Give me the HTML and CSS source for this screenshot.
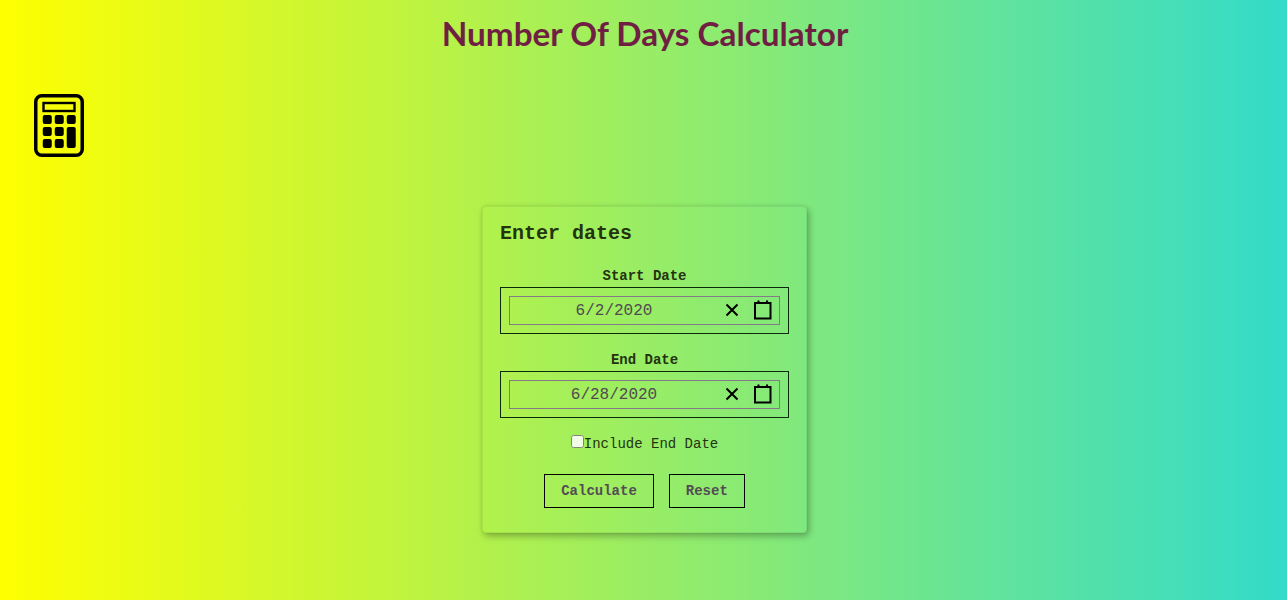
FILE: index.html
```html
<!DOCTYPE html>
<html lang="en">
<head>
  <meta charset="UTF-8">
  <title>Number Of Days Calculator</title>
  <link rel="stylesheet" href="styles.css">
</head>
<body>

  <h1>Number Of Days Calculator</h1>

  <svg class="logo" width="50" height="63" viewBox="0 0 50 63">
    <rect x="1.75" y="1.75" width="46.5" height="59.5" rx="6" fill="none" stroke="#000" stroke-width="3.5"/>
    <rect x="9.5" y="9" width="31" height="8" fill="none" stroke="#000" stroke-width="2.4"/>
    <rect x="8.75" y="21" width="9" height="9" rx="2"/>
    <rect x="20.75" y="21" width="9" height="9" rx="2"/>
    <rect x="32.75" y="21" width="9" height="9" rx="2"/>
    <rect x="8.75" y="33" width="9" height="9" rx="2"/>
    <rect x="20.75" y="33" width="9" height="9" rx="2"/>
    <rect x="32.75" y="33" width="9" height="21" rx="2"/>
    <rect x="8.75" y="45" width="9" height="9" rx="2"/>
    <rect x="20.75" y="45" width="9" height="9" rx="2"/>
  </svg>

  <div class="card">
    <h2>Enter dates</h2>

    <label class="date-label" for="inicio">Start Date</label>
    <div class="date-box">
      <div class="date-inner">
        <input class="date-input" type="text" id="inicio" value="6/2/2020">
        <svg class="icon-x" width="14" height="14" viewBox="0 0 14 14">
          <path d="M1.5 1.5 L12.5 12.5 M12.5 1.5 L1.5 12.5" stroke="#000" stroke-width="2" fill="none"/>
        </svg>
        <svg class="icon-cal" width="18" height="20" viewBox="0 0 18 20">
          <rect x="1" y="3" width="15.5" height="15.5" fill="none" stroke="#000" stroke-width="2"/>
          <path d="M4.5 0.5 V3 M13 0.5 V3" stroke="#000" stroke-width="2" fill="none"/>
        </svg>
      </div>
    </div>

    <label class="date-label" for="fim">End Date</label>
    <div class="date-box">
      <div class="date-inner">
        <input class="date-input" type="text" id="fim" value="6/28/2020">
        <svg class="icon-x" width="14" height="14" viewBox="0 0 14 14">
          <path d="M1.5 1.5 L12.5 12.5 M12.5 1.5 L1.5 12.5" stroke="#000" stroke-width="2" fill="none"/>
        </svg>
        <svg class="icon-cal" width="18" height="20" viewBox="0 0 18 20">
          <rect x="1" y="3" width="15.5" height="15.5" fill="none" stroke="#000" stroke-width="2"/>
          <path d="M4.5 0.5 V3 M13 0.5 V3" stroke="#000" stroke-width="2" fill="none"/>
        </svg>
      </div>
    </div>

    <div class="include">
      <input type="checkbox" id="incluir">
      <label for="incluir">Include End Date</label>
    </div>

    <div class="actions">
      <button type="button">Calculate</button>
      <button type="button">Reset</button>
    </div>
  </div>

</body>
</html>
```

FILE: styles.css
```css
html, body {
  height: 100%;
}

body {
  margin: 0;
  overflow: hidden;
  font-family: "Liberation Mono", monospace;
  background: linear-gradient(to right, #ffff00, #33dbc9);
  color: #24330f;
}

h1 {
  margin: 0;
  padding-top: 13px;
  padding-left: 3px;
  height: 47px;
  line-height: 40px;
  text-align: center;
  font-family: "Lato", sans-serif;
  font-size: 33.3px;
  font-weight: 700;
  color: #6f1f42;
}

.logo {
  display: block;
  margin: 34px 0 0 34px;
}

.card {
  box-sizing: border-box;
  width: 325px;
  height: 327px;
  margin: 49px 0 0 482px;
  padding: 16px 17px;
  border: 1px solid rgba(0, 0, 0, 0.06);
  border-radius: 4px;
  box-shadow: 2px 3px 7px rgba(0, 0, 0, 0.3), 0 0 2px rgba(0, 0, 0, 0.12);
}

h2 {
  margin: 0 0 23px;
  font-size: 20px;
  line-height: 22px;
  font-weight: 700;
}

.date-label {
  display: block;
  text-align: center;
  font-size: 14px;
  line-height: 16px;
  font-weight: 700;
  margin-bottom: 3px;
}

.date-box {
  box-sizing: border-box;
  height: 47px;
  margin-bottom: 18px;
  padding: 8px;
  border: 1px solid #0a2a0a;
}

.date-inner {
  box-sizing: border-box;
  display: flex;
  align-items: center;
  height: 29px;
  border: 1px solid #857a8a;
}

.date-input {
  flex: 1;
  min-width: 0;
  margin-right: 7px;
  padding: 0;
  border: none;
  background: transparent;
  text-align: center;
  font-family: "Liberation Mono", monospace;
  font-size: 16px;
  color: #504a50;
  outline: none;
}

.icon-x {
  margin-right: 15px;
  margin-bottom: 2px;
}

.icon-cal {
  margin-right: 7px;
  margin-bottom: 2px;
}

.include {
  display: flex;
  justify-content: center;
  align-items: flex-start;
  margin-top: -1px;
  font-size: 14px;
  line-height: 18px;
}

.include input {
  width: 13px;
  height: 13px;
  margin: 0;
  opacity: 0.85;
}

.actions {
  display: flex;
  justify-content: center;
  gap: 15px;
  margin-top: 21px;
}

button {
  box-sizing: border-box;
  height: 34px;
  padding: 0 16px;
  border: 1px solid #000;
  background: transparent;
  font-family: "Liberation Mono", monospace;
  font-size: 14px;
  font-weight: 700;
  color: #544c54;
  cursor: pointer;
}
```
